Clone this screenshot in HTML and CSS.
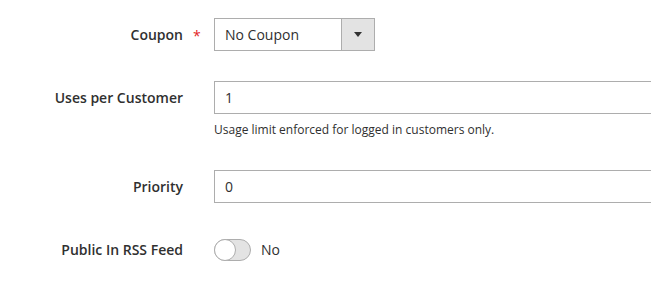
FILE: index.html
```html
<!DOCTYPE html>
<html>
<head>
<meta charset="utf-8">
<link rel="stylesheet" href="styles.css">
</head>
<body>
<div class="form">
  <div class="field">
    <label class="label required">Coupon<span class="star">*</span></label>
    <div class="control">
      <div class="select">
        <span class="select-value">No Coupon</span>
        <span class="select-btn"><span class="arrow"></span></span>
      </div>
    </div>
  </div>
  <div class="field">
    <label class="label">Uses per Customer</label>
    <div class="control">
      <div class="input">1</div>
      <div class="note">Usage limit enforced for logged in customers only.</div>
    </div>
  </div>
  <div class="field">
    <label class="label">Priority</label>
    <div class="control">
      <div class="input">0</div>
    </div>
  </div>
  <div class="field">
    <label class="label">Public In RSS Feed</label>
    <div class="control toggle-row">
      <span class="toggle"><span class="knob"></span></span>
      <span class="toggle-text">No</span>
    </div>
  </div>
</div>
</body>
</html>
```
FILE: styles.css
```css
html, body {
  margin: 0;
  padding: 0;
  overflow: hidden;
  background: #fff;
}
body {
  font-family: "Open Sans", "Liberation Sans", sans-serif;
  color: #303030;
  font-size: 14px;
}
.form {
  padding-top: 18px;
  display: flex;
  flex-direction: column;
  gap: 30px;
  width: 651px;
}
.field {
  display: flex;
  align-items: flex-start;
}
.label {
  width: 183px;
  flex: 0 0 183px;
  text-align: right;
  font-weight: 600;
  line-height: 33px;
  height: 33px;
  position: relative;
  white-space: nowrap;
}
.star {
  position: absolute;
  left: 193px;
  top: 1px;
  color: #e22626;
  font-weight: 400;
  font-size: 14px;
}
.control {
  margin-left: 31px;
  flex: 1 1 auto;
  min-width: 0;
  overflow: hidden;
}
.select {
  display: flex;
  width: 159px;
  height: 31px;
  border: 1px solid #adadad;
  background: #fff;
}
.select-value {
  flex: 1;
  padding-left: 10px;
  line-height: 31px;
}
.select-btn {
  width: 32px;
  border-left: 1px solid #adadad;
  background: #e3e3e3;
  display: flex;
  align-items: center;
  justify-content: center;
}
.arrow {
  width: 0;
  height: 0;
  border-left: 4px solid transparent;
  border-right: 4px solid transparent;
  border-top: 5px solid #333;
}
.input {
  width: 500px;
  height: 31px;
  line-height: 31px;
  border: 1px solid #adadad;
  padding: 0 10px;
}
.note {
  margin-top: 7px;
  margin-bottom: 1px;
  font-size: 12px;
  line-height: 18px;
  white-space: nowrap;
}
.toggle-row {
  display: flex;
  align-items: center;
  height: 33px;
}
.toggle {
  box-sizing: border-box;
  width: 37px;
  height: 22px;
  border: 1px solid #adadad;
  border-radius: 12px;
  background: #e3e3e3;
  position: relative;
  display: block;
  flex: 0 0 auto;
}
.knob {
  position: absolute;
  left: -1px;
  top: -1px;
  box-sizing: border-box;
  width: 22px;
  height: 22px;
  border: 1px solid #adadad;
  border-radius: 50%;
  background: #fff;
}
.toggle-text {
  margin-left: 10px;
}
```
